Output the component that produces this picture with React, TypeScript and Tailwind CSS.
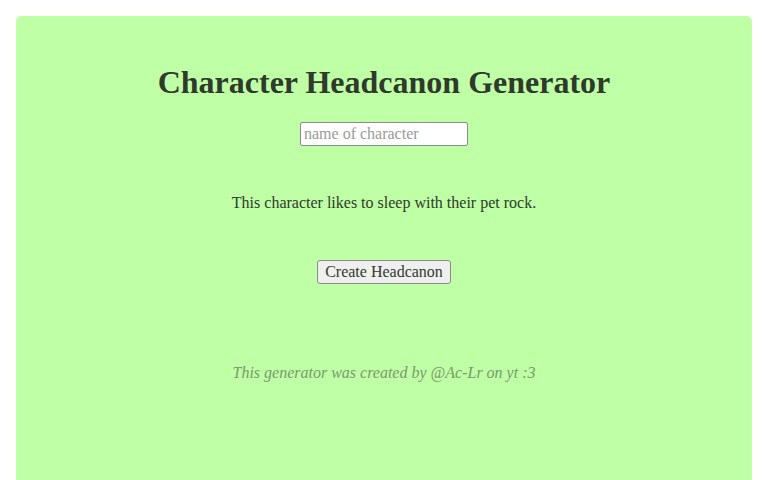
import React from "react";

export default function App() {
  return (
    <div className="min-h-[480px] bg-white pt-4 px-4 overflow-hidden" style={{ fontFamily: '"Liberation Serif", serif' }}>
      <div className="bg-[#bfffa5] rounded-[5px] min-h-[470px] flex flex-col items-center pt-[48px]">
        <h1 className="text-[32px] leading-[36px] font-bold text-[#2f3a2c] m-0">Character Headcanon Generator</h1>
        <input
          placeholder="name of character"
          className="mt-[22px] w-[168px] h-[24px] bg-white border border-[#8a8a8a] rounded-[2px] px-[3px] text-[16px] text-[#333] placeholder:text-[#9a9a9a] outline-none"
          style={{ fontFamily: '"Liberation Serif", serif' }}
        />
        <p className="mt-[48px] text-[16px] leading-[18px] text-[#2f3a2c]">This character likes to sleep with their pet rock.</p>
        <button
          className="mt-[48px] h-[24px] px-[7px] bg-[#efefef] border border-[#8a8a8a] rounded-[3px] text-[16px] leading-[18px] text-[#2f3a2c]"
          style={{ fontFamily: '"Liberation Serif", serif' }}
        >
          Create Headcanon
        </button>
        <p className="mt-[80px] text-[16px] leading-[18px] italic text-[#7a9a6c]">This generator was created by @Ac-Lr on yt :3</p>
      </div>
    </div>
  );
}
